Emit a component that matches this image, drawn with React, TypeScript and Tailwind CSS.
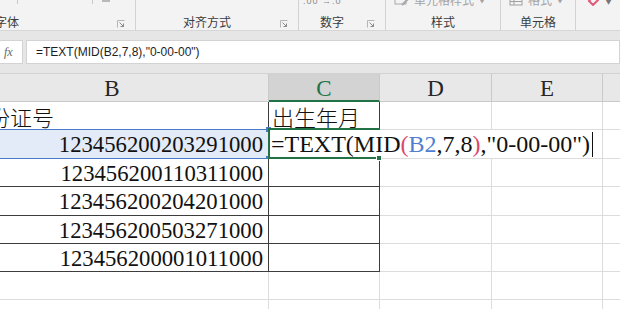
import React from "react";

const ids = [
  "123456200203291000",
  "123456200110311000",
  "123456200204201000",
  "123456200503271000",
  "123456200001011000",
];

const rowHeights = ["h-[28px]", "h-[29px]", "h-[28px]", "h-[29px]", "h-[28px]", "h-[28px]", "h-[28px]", "h-[28px]"];

function Launcher() {
  return (
    <svg width="8" height="8" viewBox="0 0 8 8" className="shrink-0">
      <path d="M0.5 7.5V0.5H7.5" fill="none" stroke="#b5b5b5" strokeWidth="1" />
      <path d="M2.5 2.5L6.5 6.5M6.5 3.5V6.5H3.5" fill="none" stroke="#8a8a8a" strokeWidth="1" />
    </svg>
  );
}

function RibbonGroup({
  label,
  width,
  launcher,
  children,
  labelClass = "",
}: {
  label: string;
  width: string;
  launcher?: boolean;
  children?: React.ReactNode;
  labelClass?: string;
}) {
  return (
    <div className={`${width} shrink-0 h-full border-r border-[#d2d2d2] flex flex-col`}>
      <div className="h-[14px] overflow-hidden relative">{children}</div>
      <div className="flex-1 flex items-center relative">
        <div className={`flex-1 text-center text-[12px] leading-none text-[#3c3c3c] ${labelClass}`}>{label}</div>
        {launcher && (
          <div className="w-[20px] flex justify-start pl-[2px] pt-[3px]">
            <Launcher />
          </div>
        )}
      </div>
    </div>
  );
}

function Ribbon() {
  return (
    <div className="h-[31px] bg-[#f3f3f3] border-b border-[#d6d6d6] flex font-['Noto_Sans_CJK_SC',sans-serif]">
      <RibbonGroup label="字体" width="w-[136px]" launcher labelClass="text-left -ml-[5px]">
        <div className="absolute left-[17px] top-0 w-px h-[4px] bg-[#c9c9c9]" />
        <div className="absolute left-[92px] top-0 w-px h-[4px] bg-[#c9c9c9]" />
        <div className="absolute left-[102px] top-0 w-[8px] h-[2px] bg-[#b9b9b9]" />
      </RibbonGroup>
      <RibbonGroup label="对齐方式" width="w-[163px]" launcher />
      <RibbonGroup label="数字" width="w-[87px]" launcher>
        <div className="absolute left-[4px] -top-[5px] text-[9px] text-[#8a8a8a] font-['Liberation_Sans',sans-serif] tracking-[1px]">
          .00 →.0
        </div>
      </RibbonGroup>
      <RibbonGroup label="样式" width="w-[115px]">
        <div className="absolute left-[8px] -top-[9px] flex items-center gap-[4px] text-[12px] text-[#a3a3a3]">
          <svg width="16" height="14" viewBox="0 0 16 14">
            <rect x="1" y="2" width="11" height="9" fill="none" stroke="#a8a8a8" />
            <path d="M8 12L15 5" stroke="#a8a8a8" strokeWidth="2" />
          </svg>
          <span>单元格样式</span>
          <span className="text-[8px]">▼</span>
        </div>
      </RibbonGroup>
      <RibbonGroup label="单元格" width="w-[75px]">
        <div className="absolute left-[8px] -top-[9px] flex items-center gap-[4px] text-[12px] text-[#a3a3a3]">
          <svg width="15" height="14" viewBox="0 0 15 14">
            <rect x="1" y="1" width="12" height="11" fill="none" stroke="#a0a0a0" />
            <path d="M1 5H13M1 8.5H13M5 1V12" stroke="#a0a0a0" />
          </svg>
          <span>格式</span>
          <span className="text-[8px]">▼</span>
        </div>
      </RibbonGroup>
      <div className="flex-1 relative">
        <div className="absolute left-[11px] -top-[6px]">
          <svg width="12" height="12" viewBox="0 0 12 12">
            <path d="M2 7L7 2L11 6L6 11Z" fill="none" stroke="#e05a7a" strokeWidth="2" />
          </svg>
        </div>
        <div className="absolute left-[29px] -top-[4px] text-[7px] text-[#777]">▼</div>
      </div>
    </div>
  );
}

function FormulaBar() {
  return (
    <div className="h-[42px] bg-[#e6e6e6] pt-[9px]">
      <div className="h-[24px] flex gap-[3px]">
        <div className="w-[23px] bg-white border-y border-r border-[#d3d3d3] flex items-center pl-[4px]">
          <span className="text-[12px] italic text-[#666] font-['Liberation_Serif',serif]">fx</span>
        </div>
        <div className="flex-1 bg-white border border-[#d3d3d3] flex items-center pl-[9px]">
          <span className="text-[12px] text-[#1e1e1e] font-['Liberation_Sans',sans-serif]">
            =TEXT(MID(B2,7,8),"0-00-00")
          </span>
        </div>
      </div>
    </div>
  );
}

function HeaderRow() {
  const cell = "h-[28px] border-r border-b border-[#c9c9c9] flex items-center justify-center pt-[4px] text-[23px]";
  return (
    <div className="flex border-t border-[#d2d2d2] bg-[#e8e8e8] font-['Liberation_Serif',serif] text-[#262626]">
      <div className={`w-[313px] shrink-0 ${cell}`}>B</div>
      <div className={`w-[111px] shrink-0 ${cell} bg-[#d3d3d3] text-[#217346] border-b-2 border-b-[#217346]`}>C</div>
      <div className={`w-[112px] shrink-0 ${cell}`}>D</div>
      <div className={`w-[111px] shrink-0 ${cell}`}>E</div>
      <div className={`w-[100px] shrink-0 ${cell}`} />
    </div>
  );
}

function Row({ index }: { index: number }) {
  const h = rowHeights[index];
  const inTable = index < 6;
  const grid = "border-[#dcdcdc]";
  const dark = "border-[#3d3d3d]";
  const id = index >= 1 && index <= 5 ? ids[index - 1] : "";
  const isB2 = index === 1;
  const isC2 = index === 1;

  return (
    <div className={`flex ${h}`}>
      <div
        className={`w-[313px] shrink-0 border-r border-b ${inTable ? dark : grid} relative flex items-center ${
          isB2 ? "bg-[#e2ebf7]" : "bg-white"
        }`}
      >
        {index === 0 ? (
          <span className="pl-[10px] pt-[2px] text-[22px] font-light font-['Noto_Sans_CJK_SC',sans-serif] text-[#111]">身份证号</span>
        ) : (
          <span className="ml-auto pr-[5px] pt-[3px] text-[22.7px] font-['Liberation_Serif',serif] text-[#111]">{id}</span>
        )}
        {isB2 && (
          <div className="absolute left-0 right-[-1px] top-[-1px] bottom-[-1px] border-y border-r border-[#4a7bc8] pointer-events-none">
            <div className="absolute -right-[3px] -top-[3px] w-[5px] h-[5px] bg-[#4a7bc8]" />
            <div className="absolute -right-[3px] -bottom-[3px] w-[5px] h-[5px] bg-[#4a7bc8]" />
          </div>
        )}
      </div>
      <div className={`w-[111px] shrink-0 border-r border-b ${inTable ? dark : grid} bg-white relative flex items-center`}>
        {index === 0 && (
          <span className="pl-[3px] pt-[2px] text-[22px] font-light font-['Noto_Sans_CJK_SC',sans-serif] text-[#111]">出生年月</span>
        )}
        {isC2 && (
          <>
            <div className="absolute left-0 top-0 h-[28px] w-[326px] bg-white z-20 flex items-center pl-[2px] font-['Liberation_Serif',serif] text-[24px] text-[#111] whitespace-nowrap">
              <span>=TEXT(MID</span>
              <span className="text-[#d9486b]">(</span>
              <span className="text-[#4f7fd0]">B2</span>
              <span>,7,8</span>
              <span className="text-[#d9486b]">)</span>
              <span>,"0-00-00")</span>
              <span className="inline-block w-px h-[25px] bg-[#111] ml-[2px]" />
            </div>
            <div className="absolute left-[-1px] top-[-2px] w-[112px] h-[31px] border-t-2 border-b-2 border-l-2 border-[#217346] z-30 pointer-events-none" />
            <div className="absolute left-[107px] top-[25px] w-[6px] h-[6px] bg-[#217346] border border-white z-40" />
          </>
        )}
      </div>
      <div className={`w-[112px] shrink-0 border-r border-b ${grid} bg-white`} />
      <div className={`w-[111px] shrink-0 border-r border-b ${grid} bg-white`} />
      <div className={`w-[100px] shrink-0 border-r border-b ${grid} bg-white`} />
    </div>
  );
}

export default function App() {
  return (
    <div className="w-[620px] h-[309px] overflow-hidden bg-white relative">
      <Ribbon />
      <FormulaBar />
      <div className="-ml-[44px] w-[747px]">
        <HeaderRow />
        {rowHeights.map((_, i) => (
          <Row key={i} index={i} />
        ))}
      </div>
    </div>
  );
}
